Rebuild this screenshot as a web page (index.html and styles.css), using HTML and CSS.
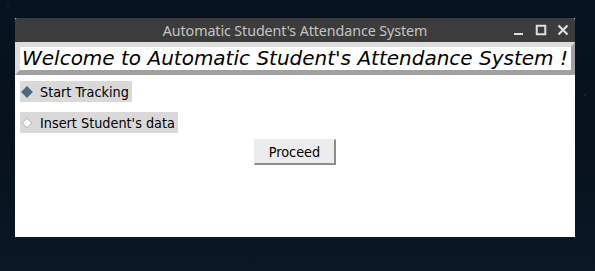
FILE: index.html
```html
<!DOCTYPE html>
<html>
<head>
<meta charset="utf-8">
<link rel="stylesheet" href="styles.css">
</head>
<body>
<div class="desktop">
  <div class="window">
    <div class="titlebar">
      <span class="title">Automatic Student's Attendance System</span>
      <div class="controls">
        <svg class="ctl" width="12" height="12" viewBox="0 0 12 12"><rect x="1" y="9" width="9" height="2" fill="#dedede"/></svg>
        <svg class="ctl" width="12" height="12" viewBox="0 0 12 12"><rect x="1.75" y="1.75" width="8.5" height="8.5" fill="none" stroke="#dedede" stroke-width="2"/></svg>
        <svg class="ctl" width="12" height="12" viewBox="0 0 12 12"><path d="M1.5 1.5 L10.5 10.5 M10.5 1.5 L1.5 10.5" stroke="#dedede" stroke-width="2.2"/></svg>
      </div>
    </div>
    <div class="content">
      <div class="header">Welcome to Automatic Student's Attendance System !</div>
      <div class="radios">
        <div class="radio"><span class="ind on"></span><span class="label">Start Tracking</span></div>
        <div class="radio"><span class="ind"></span><span class="label">Insert Student's data</span></div>
      </div>
      <div class="actions">
        <button class="btn">Proceed</button>
      </div>
    </div>
  </div>
</div>
</body>
</html>
```

FILE: styles.css
```css
html, body {
  margin: 0;
  padding: 0;
}
body {
  width: 595px;
  height: 271px;
  overflow: hidden;
  background:
    radial-gradient(circle at 560px 60px, rgba(120,150,180,0.5) 0, rgba(120,150,180,0) 1px),
    radial-gradient(circle at 585px 95px, rgba(120,150,180,0.5) 0, rgba(120,150,180,0) 1px),
    radial-gradient(circle at 8px 6px, rgba(120,150,180,0.4) 0, rgba(120,150,180,0) 1px),
    linear-gradient(180deg, #071320 0%, #06111b 50%, #0a1826 100%);
}
.desktop {
  padding: 18px 0 0 15px;
}
.window {
  width: 560px;
  height: 219px;
  background: #ffffff;
  display: flex;
  flex-direction: column;
}
.titlebar {
  height: 24px;
  background: #3c3c3c;
  display: flex;
  align-items: center;
  justify-content: center;
  position: relative;
  border-radius: 2px 2px 0 0;
}
.title {
  font-family: "Noto Sans", "Open Sans", sans-serif;
  font-size: 14.3px;
  color: #c4c4c4;
  letter-spacing: -0.1px;
}
.controls {
  position: absolute;
  right: 6px;
  top: 6px;
  display: flex;
  gap: 10px;
}
.ctl {
  display: block;
}
.content {
  flex: 1;
  display: flex;
  flex-direction: column;
}
.header {
  border-style: solid;
  border-width: 5px 4px 5px 5px;
  border-color: #dcdcdc #a0a0a0 #a0a0a0 #dcdcdc;
  background: #ffffff;
  height: 23px;
  line-height: 23px;
  padding-left: 2px;
  font-family: "DejaVu Sans", sans-serif;
  font-style: italic;
  font-size: 20px;
  color: #000;
  white-space: nowrap;
  overflow: hidden;
}
.radios {
  display: flex;
  flex-direction: column;
  align-items: flex-start;
  gap: 10px;
  padding: 6px 0 0 5px;
}
.radio {
  display: flex;
  align-items: center;
  height: 21px;
  background: #d9d9d9;
  padding: 0 3px 0 0;
  font-family: "DejaVu Sans Condensed", "DejaVu Sans", sans-serif;
  font-stretch: condensed;
  font-size: 14.3px;
  color: #000;
}
.ind {
  width: 8px;
  height: 8px;
  transform: rotate(45deg);
  background: #ffffff;
  border: 1px solid #b4b4b4;
  margin: 0 9px 0 3px;
  box-sizing: border-box;
}
.ind.on {
  background: #4a6984;
  border-color: #4a6984;
}
.actions {
  display: flex;
  justify-content: center;
  padding-top: 6px;
}
.btn {
  width: 82px;
  height: 26px;
  background: #ececec;
  border-style: solid;
  border-width: 1px 2px 2px 1px;
  border-color: #ececec #8c8c8c #8c8c8c #ececec;
  font-family: "DejaVu Sans Condensed", "DejaVu Sans", sans-serif;
  font-stretch: condensed;
  font-size: 14.3px;
  color: #000;
  padding: 0;
  margin: 0;
}
```
